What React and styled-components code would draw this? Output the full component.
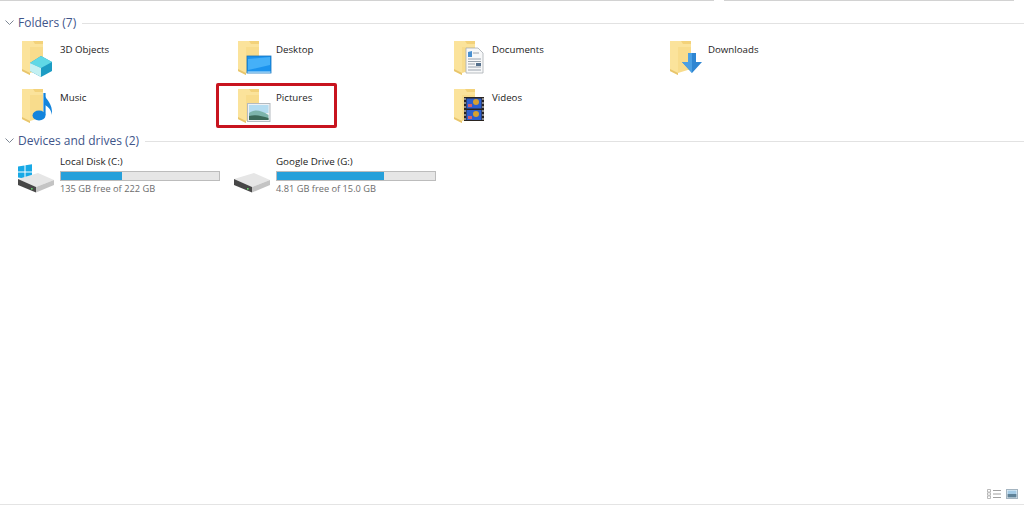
import React from 'react'
import styled, { createGlobalStyle } from 'styled-components'

const Global = createGlobalStyle`
  html, body { margin: 0; padding: 0; background: #fff; }
  body { font-family: "Open Sans", "Noto Sans", sans-serif; }
`

const Page = styled.div`
  width: 1024px;
  height: 505px;
  display: flex;
  flex-direction: column;
  overflow: hidden;
  background: #fff;
`
const TopRule = styled.div`
  height: 1px;
  display: flex;
  gap: 10px;
  padding-right: 10px;
  flex: none;
`
const RuleSegment = styled.div`
  height: 1px;
  background: #d2d2d2;
  flex: ${p => p.$grow};
`
const Main = styled.main`
  flex: 1;
  padding-top: 14px;
`
const SectionHeader = styled.div`
  display: flex;
  align-items: center;
  height: 16px;
  padding-left: 5px;
  margin-bottom: ${p => p.$gap}px;
`
const Chevron = styled.svg`
  width: 9px;
  height: 6px;
  flex: none;
  margin-right: 4px;
`
const SectionTitle = styled.span`
  font-size: 12px;
  line-height: 16px;
  color: #40558a;
  white-space: nowrap;
  margin-right: 6px;
`
const SectionLine = styled.div`
  flex: 1;
  height: 1px;
  background: #e2e2e2;
`
const Grid = styled.div`
  display: grid;
  grid-template-columns: repeat(4, 216px);
  grid-auto-rows: ${p => p.$row}px;
  padding-left: 18px;
  margin-bottom: ${p => p.$after}px;
`
const Tile = styled.div`
  position: relative;
  display: flex;
  gap: 4px;
`
const IconSlot = styled.svg`
  width: 38px;
  height: 42px;
  flex: none;
`
const TileName = styled.div`
  font-size: 9.7px;
  line-height: 14px;
  color: #222;
  padding-top: 5px;
  white-space: nowrap;
`
const Highlight = styled.div`
  position: absolute;
  left: -18px;
  top: -3px;
  width: 115px;
  height: 39px;
  border: 3px solid #c8141f;
  border-radius: 2px;
`
const DriveBody = styled.div`
  width: 160px;
  display: flex;
  flex-direction: column;
`
const DriveName = styled.div`
  font-size: 9.8px;
  line-height: 14px;
  color: #222;
  white-space: nowrap;
`
const Bar = styled.div`
  height: 10px;
  margin-top: 2px;
  box-sizing: border-box;
  border: 1px solid #bcbcbc;
  background: #e6e6e6;
`
const BarFill = styled.div`
  height: 100%;
  background: #26a0da;
`
const DriveFree = styled.div`
  font-size: 9.25px;
  line-height: 14px;
  margin-top: 1px;
  color: #6d6d6d;
  white-space: nowrap;
`
const Footer = styled.footer`
  height: 16px;
  flex: none;
  display: flex;
  justify-content: flex-end;
  align-items: flex-start;
  gap: 5px;
  padding-right: 6px;
  box-sizing: border-box;
  border-bottom: 1px solid #e4e4e4;
`
const ViewIcon = styled.svg`
  height: 10px;
  width: ${p => p.$w}px;
`

function FolderShape() {
  return (
    <g>
      <path d="M10 3H25V32H10z" fill="#f3d27a" />
      <path d="M4 3H15L17 6H25V9H12V37L4 33z" fill="#fbe39b" />
      <path d="M12 9H25V31L12 35z" fill="#f8dc8c" />
      <path d="M4 33L12 37V35L4 31z" fill="#e8c56c" />
    </g>
  )
}

const overlays = {
  cube: (
    <g>
      <path d="M12 25L23 18L34 24V33L23 39L12 33z" fill="#1c9cc4" />
      <path d="M12 25L23 18L34 24L23 30z" fill="#5fd8e6" />
      <path d="M12 25L23 30V39L12 33z" fill="#c3f0f2" />
    </g>
  ),
  desktop: (
    <g>
      <rect x="13" y="18" width="24" height="17" fill="#1b93ee" stroke="#1273bd" strokeWidth="0.8" />
      <path d="M14 21L36 19V27L14 32z" fill="#45b0f8" />
      <rect x="13.5" y="33.5" width="23" height="1.2" fill="#bfe3fa" />
    </g>
  ),
  documents: (
    <g>
      <path d="M16 10H28L33 15V35H16z" fill="#f7f8f9" stroke="#a8adb2" strokeWidth="0.8" />
      <path d="M18 14L22 13V19H18z" fill="#4a90d0" />
      <path d="M23 15H29M18 21H31M18 23.5H31M18 26H25M18 29H31M18 32H31" stroke="#8f9aa5" strokeWidth="0.9" />
      <rect x="26" y="25" width="5" height="3" fill="#55708c" />
    </g>
  ),
  downloads: (
    <g>
      <path d="M22 15H30V24H36L26 35L16 24H22z" fill="#2f86d2" />
      <path d="M22 15H26V35L16 24H22z" fill="#4aa0e4" />
    </g>
  ),
  music: (
    <g>
      <path d="M26.5 7V29" stroke="#1284dc" strokeWidth="2.2" />
      <ellipse cx="21" cy="29.5" rx="6.5" ry="5" fill="#1284dc" />
      <path d="M26 8C28 14 35 17 34 29C33 23 30 21 27 19z" fill="#1284dc" />
    </g>
  ),
  pictures: (
    <g>
      <rect x="13.5" y="17.5" width="22.5" height="18" fill="#eef1f4" stroke="#b4bac0" />
      <rect x="15" y="19" width="19.5" height="8" fill="#b4dcf0" />
      <path d="M15 27C20 23 27 24 34.5 29V34H15z" fill="#7db4ac" />
      <path d="M15 30C22 28 28 30 34.5 32V34H15z" fill="#3c6a5a" />
    </g>
  ),
  videos: (
    <g>
      <rect x="14" y="11" width="20" height="24" fill="#2a2420" />
      <rect x="16.5" y="12.5" width="15" height="10" fill="#2c5fd0" />
      <rect x="16.5" y="24" width="15" height="10" fill="#2c5fd0" />
      <circle cx="26" cy="16" r="3" fill="#d8a030" />
      <circle cx="26" cy="28" r="3" fill="#d8a030" />
      <path d="M18 18H22V21H18zM18 30H22V33H18z" fill="#d06070" />
      <path d="M14.5 13H15.5M14.5 17H15.5M14.5 21H15.5M14.5 25H15.5M14.5 29H15.5M14.5 33H15.5M32.5 13H33.5M32.5 17H33.5M32.5 21H33.5M32.5 25H33.5M32.5 29H33.5M32.5 33H33.5" stroke="#f0f0f0" strokeWidth="2" />
    </g>
  ),
}

function FolderIcon({ kind }) {
  return (
    <IconSlot viewBox="0 0 38 42">
      <FolderShape />
      {overlays[kind]}
    </IconSlot>
  )
}

function DriveIcon({ windows }) {
  return (
    <IconSlot viewBox="0 0 38 42">
      {windows && (
        <g fill="#18a9e6">
          <path d="M0 11.5L6.5 10.5V16.5H0z" />
          <path d="M7.5 10.3L14 9.3V16.5H7.5z" />
          <path d="M0 17.5H6.5V23.5L0 22.5z" />
          <path d="M7.5 17.5H14V24.7L7.5 23.7z" />
        </g>
      )}
      <path d="M0 24L20 18L36 25L18 32z" fill="#e6e6e6" />
      <path d="M0 24L18 32V37.5L0 30z" fill="#474747" />
      <path d="M18 32L36 25V30L18 37.5z" fill="#c4c4c4" />
      <rect x="13" y="33" width="1.6" height="1.6" fill="#66d66a" />
    </IconSlot>
  )
}

const folders = [
  ['3D Objects', 'cube'],
  ['Desktop', 'desktop'],
  ['Documents', 'documents'],
  ['Downloads', 'downloads'],
  ['Music', 'music'],
  ['Pictures', 'pictures'],
  ['Videos', 'videos'],
]

const drives = [
  { name: 'Local Disk (C:)', free: '135 GB free of 222 GB', used: 38.5, windows: true },
  { name: 'Google Drive (G:)', free: '4.81 GB free of 15.0 GB', used: 68, windows: false },
]

function Header({ title, gap }) {
  return (
    <SectionHeader $gap={gap}>
      <Chevron viewBox="0 0 9 6">
        <path d="M0.5 0.5L4.5 4.5L8.5 0.5" fill="none" stroke="#7d8794" strokeWidth="1" />
      </Chevron>
      <SectionTitle>{title}</SectionTitle>
      <SectionLine />
    </SectionHeader>
  )
}

export default function App() {
  return (
    <Page>
      <Global />
      <TopRule>
        <RuleSegment $grow="714" />
        <RuleSegment $grow="290" />
      </TopRule>
      <Main>
        <Header title="Folders (7)" gap={7} />
        <Grid $row={48} $after={-1}>
          {folders.map(([name, kind]) => (
            <Tile key={name}>
              <FolderIcon kind={kind} />
              <TileName>{name}</TileName>
              {name === 'Pictures' && <Highlight />}
            </Tile>
          ))}
        </Grid>
        <Header title="Devices and drives (2)" gap={6} />
        <Grid $row={46} $after={0}>
          {drives.map(d => (
            <Tile key={d.name}>
              <DriveIcon windows={d.windows} />
              <DriveBody>
                <DriveName>{d.name}</DriveName>
                <Bar>
                  <BarFill style={{ width: `${d.used}%` }} />
                </Bar>
                <DriveFree>{d.free}</DriveFree>
              </DriveBody>
            </Tile>
          ))}
        </Grid>
      </Main>
      <Footer>
        <ViewIcon $w={14} viewBox="0 0 14 10">
          <path d="M0.5 0.5H3.5V3H0.5zM0.5 3.8H3.5V6.2H0.5zM0.5 7H3.5V9.5H0.5z" fill="none" stroke="#a8a8a8" strokeWidth="0.8" />
          <path d="M6 1.5H14M6 5H14M6 8.5H14" stroke="#a0a0a0" strokeWidth="1.2" />
        </ViewIcon>
        <ViewIcon $w={12} viewBox="0 0 12 10">
          <rect x="0.5" y="0.5" width="11" height="9" fill="#eef4f8" stroke="#a4b4c0" />
          <rect x="1.5" y="1.5" width="9" height="3.5" fill="#a4cbe6" />
          <rect x="1.5" y="5" width="9" height="3.5" fill="#5f8298" />
        </ViewIcon>
      </Footer>
    </Page>
  )
}
